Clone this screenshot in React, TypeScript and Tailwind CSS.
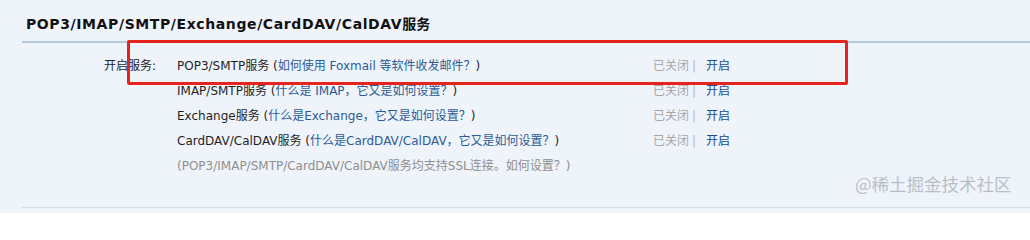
import React from "react";

const font = { fontFamily: '"DejaVu Sans", Verdana, "Noto Sans CJK SC", sans-serif' };

type Row = { name: string; link: string };

const rows: Row[] = [
  { name: "POP3/SMTP服务", link: "如何使用 Foxmail 等软件收发邮件？" },
  { name: "IMAP/SMTP服务", link: "什么是 IMAP，它又是如何设置？" },
  { name: "Exchange服务", link: "什么是Exchange，它又是如何设置？" },
  { name: "CardDAV/CalDAV服务", link: "什么是CardDAV/CalDAV，它又是如何设置？" },
];

export default function App() {
  return (
    <div
      className="relative w-[1030px] h-[213px] overflow-hidden bg-[#eff4fb] text-[12px] text-[#1f1f1f]"
      style={font}
    >
      <div className="pt-[14px] ml-[22px]">
        <div className="pl-[4px] pb-[7px] border-b-2 border-[#b3c9dc]">
          <h2 className="text-[14px] leading-[20px] font-bold text-[#111]">
            <span className="tracking-[0.6px]">POP3/IMAP/SMTP/Exchange/CardDAV/CalDAV</span>服务
          </h2>
        </div>
      </div>

      <div className="ml-[22px] mt-[11px] flex">
        <div className="w-[134px] text-right leading-[25px] h-[25px]">开启服务:</div>
        <div className="ml-[21px] flex flex-col">
          {rows.map((r) => (
            <div key={r.name} className="flex h-[25px] leading-[25px] items-center">
              <div className="w-[476px] whitespace-nowrap">
                {r.name} (<span className="text-[#2b5a98]">{r.link}</span>)
              </div>
              <div className="whitespace-nowrap">
                <span className="text-[#a6a6a6]">已关闭</span>
                <span className="text-[#b5b5b5] ml-[3px]">|</span>
                <span className="text-[#1f4a86] ml-[10px]">开启</span>
              </div>
            </div>
          ))}
          <div className="h-[25px] leading-[25px] text-[#8e8e8e] whitespace-nowrap">
            (POP3/IMAP/SMTP/CardDAV/CalDAV服务均支持SSL连接。如何设置？)
          </div>
        </div>
      </div>

      <div className="absolute left-[22px] right-0 top-[207px] border-t border-[#d5dce5]" />

      <div className="absolute left-[127px] top-[40px] w-[721px] h-[45px] border-[3px] border-[#e5251d] rounded-[2px]" />

      <div
        className="absolute left-[855px] top-[172px] text-[17.5px] leading-[24px] text-[#b9bfc8] whitespace-nowrap"
        style={{ fontFamily: '"Noto Sans CJK SC", sans-serif' }}
      >
        @稀土掘金技术社区
      </div>
    </div>
  );
}
